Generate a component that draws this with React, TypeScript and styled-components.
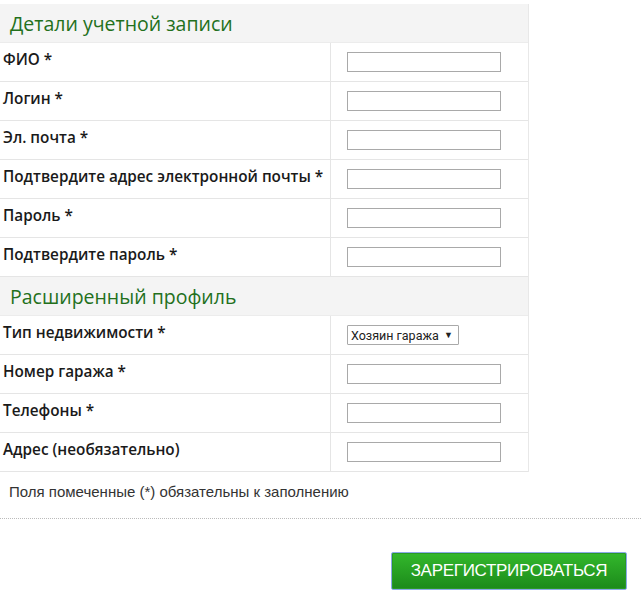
import React from "react";
import styled, { createGlobalStyle } from "styled-components";

const Global = createGlobalStyle`
  html, body { margin: 0; padding: 0; background: #fff; }
  body { font-family: "Open Sans", "Liberation Sans", sans-serif; color: #222; }
`;

const Page = styled.div`
  width: 641px;
  padding-top: 4px;
`;

const Table = styled.div`
  width: 529px;
  border-right: 1px solid #e8e8e8;
  box-sizing: border-box;
`;

const SectionHead = styled.div`
  height: 38px;
  background: #f4f4f4;
  display: flex;
  align-items: center;
  padding-left: 10px;
  font-size: 19.5px;
  font-weight: 500;
  color: #23701c;
  border-bottom: 1px solid #ececec;
`;

const Row = styled.div`
  display: grid;
  grid-template-columns: 331px 1fr;
  height: 39px;
  box-sizing: border-box;
  border-bottom: 1px solid #e5e5e5;
`;

const Label = styled.div`
  font-size: 15.3px;
  font-weight: 600;
  color: #1a1a1a;
  padding: 6px 0 0 3px;
  border-right: 1px solid #e5e5e5;
  white-space: nowrap;
`;

const Cell = styled.div`
  display: flex;
  align-items: center;
  padding-left: 16px;
`;

const Input = styled.input`
  width: 154px;
  height: 20px;
  box-sizing: border-box;
  border: 1px solid #a9a9a9;
  padding: 0;
  margin: 0;
  outline: none;
`;

const Select = styled.div`
  width: 112px;
  height: 20px;
  box-sizing: border-box;
  border: 1px solid #a9a9a9;
  border-radius: 1px;
  display: flex;
  align-items: center;
  justify-content: space-between;
  padding: 0 5px 0 3px;
  font-family: "Roboto", "Liberation Sans", sans-serif;
  font-size: 12.5px;
  color: #222;
`;

const Arrow = styled.span`
  font-size: 9px;
`;

const Note = styled.div`
  font-family: "Liberation Sans", Arial, sans-serif;
  font-size: 15px;
  color: #333;
  padding: 11px 0 0 9px;
  height: 35px;
`;

const Divider = styled.div`
  border-top: 1px dotted #bbb;
`;

const Actions = styled.div`
  display: flex;
  justify-content: flex-end;
  padding: 33px 14px 0 0;
`;

const Button = styled.button`
  width: 236px;
  height: 38px;
  border: 1px solid #8aaae8;
  border-radius: 2px;
  background: linear-gradient(#33b82c, #1c8a1a);
  box-shadow: inset 0 0 0 1px #2a9a26;
  color: #fff;
  font-family: "Liberation Sans", Arial, sans-serif;
  font-size: 17px;
  letter-spacing: -0.3px;
  cursor: pointer;
`;

const fields1 = [
  "ФИО *",
  "Логин *",
  "Эл. почта *",
  "Подтвердите адрес электронной почты *",
  "Пароль *",
  "Подтвердите пароль *",
];

const fields2 = ["Номер гаража *", "Телефоны *", "Адрес (необязательно)"];

export default function App() {
  return (
    <Page>
      <Global />
      <Table>
        <SectionHead>Детали учетной записи</SectionHead>
        {fields1.map((f) => (
          <Row key={f}>
            <Label>{f}</Label>
            <Cell>
              <Input />
            </Cell>
          </Row>
        ))}
        <SectionHead>Расширенный профиль</SectionHead>
        <Row>
          <Label>Тип недвижимости *</Label>
          <Cell>
            <Select>
              <span>Хозяин гаража</span>
              <Arrow>▼</Arrow>
            </Select>
          </Cell>
        </Row>
        {fields2.map((f) => (
          <Row key={f}>
            <Label>{f}</Label>
            <Cell>
              <Input />
            </Cell>
          </Row>
        ))}
      </Table>
      <Note>Поля помеченные (*) обязательны к заполнению</Note>
      <Divider />
      <Actions>
        <Button>ЗАРЕГИСТРИРОВАТЬСЯ</Button>
      </Actions>
    </Page>
  );
}
